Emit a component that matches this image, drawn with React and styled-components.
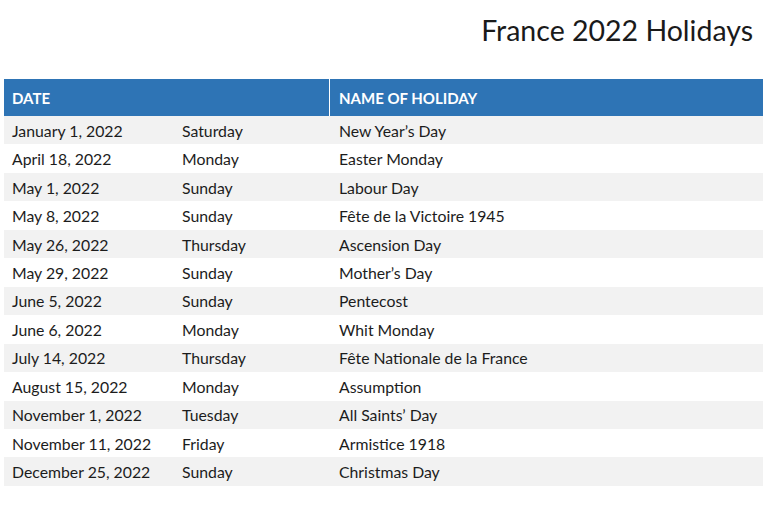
import React from "react";
import styled, { createGlobalStyle } from "styled-components";

const Global = createGlobalStyle`
  html, body { margin: 0; padding: 0; background: #ffffff; }
  body { font-family: "Lato", "Open Sans", sans-serif; }
`;

const Page = styled.div`
  width: 768px;
  height: 506px;
  display: flex;
  flex-direction: column;
  box-sizing: border-box;
`;

const TitleBar = styled.div`
  height: 79px;
  display: flex;
  justify-content: flex-end;
  align-items: flex-start;
  padding: 12px 15px 0 0;
  box-sizing: border-box;
`;

const Title = styled.h1`
  margin: 0;
  font-weight: 400;
  font-size: 28.5px;
  line-height: 36px;
  color: #1a1a1a;
`;

const Table = styled.div`
  margin: 0 5px 0 4px;
  display: grid;
  grid-template-columns: 170px 155px 1fr;
  grid-template-rows: 37px repeat(13, 28.46px);
`;

const HeadCell = styled.div`
  grid-column: span ${(p) => p.$span || 1};
  background: #2e74b5;
  color: #ffffff;
  font-weight: 700;
  font-size: 15px;
  display: flex;
  align-items: center;
  padding-left: ${(p) => p.$pad}px;
  border-left: ${(p) => (p.$divider ? "1px solid #ffffff" : "none")};
  box-sizing: border-box;
`;

const Cell = styled.div`
  background: ${(p) => (p.$odd ? "#f2f2f2" : "#ffffff")};
  color: #1c1c1c;
  font-size: 15.8px;
  display: flex;
  align-items: center;
  padding-left: ${(p) => p.$pad}px;
  white-space: nowrap;
`;

const HeadRow = styled.div`
  display: contents;
`;

const rows = [
  ["January 1, 2022", "Saturday", "New Year’s Day"],
  ["April 18, 2022", "Monday", "Easter Monday"],
  ["May 1, 2022", "Sunday", "Labour Day"],
  ["May 8, 2022", "Sunday", "Fête de la Victoire 1945"],
  ["May 26, 2022", "Thursday", "Ascension Day"],
  ["May 29, 2022", "Sunday", "Mother’s Day"],
  ["June 5, 2022", "Sunday", "Pentecost"],
  ["June 6, 2022", "Monday", "Whit Monday"],
  ["July 14, 2022", "Thursday", "Fête Nationale de la France"],
  ["August 15, 2022", "Monday", "Assumption"],
  ["November 1, 2022", "Tuesday", "All Saints’ Day"],
  ["November 11, 2022", "Friday", "Armistice 1918"],
  ["December 25, 2022", "Sunday", "Christmas Day"],
];

export default function App() {
  return (
    <Page>
      <Global />
      <TitleBar>
        <Title>France 2022 Holidays</Title>
      </TitleBar>
      <Table>
        <HeadRow>
          <HeadCell $span={2} $pad={8}>DATE</HeadCell>
          <HeadCell $pad={9} $divider>NAME OF HOLIDAY</HeadCell>
        </HeadRow>
        {rows.map((r, i) => (
          <React.Fragment key={i}>
            <Cell $odd={i % 2 === 0} $pad={8}>{r[0]}</Cell>
            <Cell $odd={i % 2 === 0} $pad={8}>{r[1]}</Cell>
            <Cell $odd={i % 2 === 0} $pad={10}>{r[2]}</Cell>
          </React.Fragment>
        ))}
      </Table>
    </Page>
  );
}
